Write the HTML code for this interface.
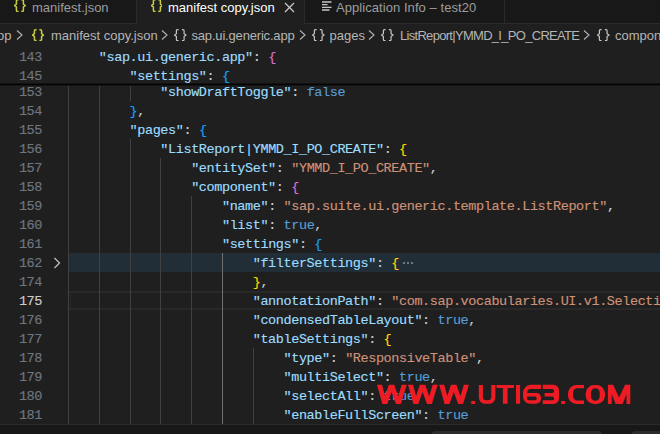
<!DOCTYPE html><html><head><meta charset="utf-8"><style>
*{margin:0;padding:0;box-sizing:border-box}
html,body{width:660px;height:434px;overflow:hidden;background:#1f1f1f}
body{position:relative;font-family:"Liberation Sans",sans-serif}
.abs{position:absolute}
#tabs{position:absolute;left:0;top:0;width:660px;height:24px;background:#181818;border-bottom:1px solid #2b2b2b}
.tab{position:absolute;top:0;height:23px;background:#181818;border-right:1px solid #2b2b2b}
.tab.act{background:#1f1f1f;height:24px}
.tt{position:absolute;top:1px;font-size:13px;line-height:13px;white-space:nowrap}
.bc{position:absolute;top:29px;font-size:13px;line-height:13px;color:#b5b5b5;white-space:nowrap}
.ln{position:absolute;left:0;-webkit-text-stroke:0.15px currentColor;width:42px;height:19px;text-align:right;font-family:"Liberation Mono",monospace;font-size:13.5px;letter-spacing:-0.403px;line-height:19px;color:#6e7681}
.ln.act{color:#cccccc}
.cl{position:absolute;height:19px;white-space:pre;-webkit-text-stroke:0.15px currentColor;font-family:"Liberation Mono",monospace;font-size:13.5px;letter-spacing:-0.403px;line-height:19px}
.ig{position:absolute;width:1px;background:#404040}
</style></head><body>

<div id="tabs"></div>
<div class="tab" style="left:0;width:137px"></div>
<div class="tab act" style="left:137px;width:168px"></div>
<div class="tab" style="left:305px;width:200px"></div>
<svg class="abs" style="left:14.2px;top:-1.5px" width="11.8" height="13.2" viewBox="0 0 11.8 13.2"><path d="M4.6,0.75 L3.4,0.75 Q2.4,0.75 2.4,1.95 L2.4,5.199999999999999 L0.5,6.6 L2.4,8.0 L2.4,11.25 Q2.4,12.45 3.4,12.45 L4.6,12.45 M7.200000000000001,0.75 L8.4,0.75 Q9.4,0.75 9.4,1.95 L9.4,5.199999999999999 L11.3,6.6 L9.4,8.0 L9.4,11.25 Q9.4,12.45 8.4,12.45 L7.200000000000001,12.45" fill="none" stroke="#cbcb41" stroke-width="1.5" stroke-linejoin="miter"/></svg>
<div class="tt" style="left:32px;color:#9d9d9d">manifest.json</div>
<svg class="abs" style="left:150.6px;top:-1.5px" width="11.8" height="13.2" viewBox="0 0 11.8 13.2"><path d="M4.6,0.75 L3.4,0.75 Q2.4,0.75 2.4,1.95 L2.4,5.199999999999999 L0.5,6.6 L2.4,8.0 L2.4,11.25 Q2.4,12.45 3.4,12.45 L4.6,12.45 M7.200000000000001,0.75 L8.4,0.75 Q9.4,0.75 9.4,1.95 L9.4,5.199999999999999 L11.3,6.6 L9.4,8.0 L9.4,11.25 Q9.4,12.45 8.4,12.45 L7.200000000000001,12.45" fill="none" stroke="#cbcb41" stroke-width="1.5" stroke-linejoin="miter"/></svg>
<div class="tt" style="left:168px;color:#ffffff">manifest copy.json</div>
<svg class="abs" style="left:284px;top:2px" width="11" height="11" viewBox="0 0 11 11"><path d="M1,1 L10,10 M10,1 L1,10" stroke="#cccccc" stroke-width="1.2"/></svg>
<svg class="abs" style="left:321px;top:0px" width="12" height="12" viewBox="0 0 12 12"><path d="M1,2 H10.5 M1,4.6 H6.5 M1,7.3 H10.5 M1,10 H8.5" stroke="#c5c5c5" stroke-width="1.3"/></svg>
<div class="tt" style="left:336px;color:#9d9d9d;letter-spacing:0.06px">Application Info – test20</div>
<div class="bc" style="left:-3px;letter-spacing:0px">op</div>
<div class="bc" style="left:51px;letter-spacing:0px">manifest copy.json</div>
<div class="bc" style="left:191.5px;letter-spacing:-0.18px">sap.ui.generic.app</div>
<div class="bc" style="left:329.5px;letter-spacing:0px">pages</div>
<div class="bc" style="left:400px;letter-spacing:-0.7px">ListReport|YMMD_I_PO_CREATE</div>
<div class="bc" style="left:615px;letter-spacing:0px">component</div>
<svg class="abs" style="left:15.5px;top:29px" width="8" height="12" viewBox="0 0 8 12"><path d="M1,1.5 L6,6 L1,10.5" fill="none" stroke="#b4b4b4" stroke-width="1.1"/></svg>
<svg class="abs" style="left:160.6px;top:29px" width="8" height="12" viewBox="0 0 8 12"><path d="M1,1.5 L6,6 L1,10.5" fill="none" stroke="#b4b4b4" stroke-width="1.1"/></svg>
<svg class="abs" style="left:298.8px;top:29px" width="8" height="12" viewBox="0 0 8 12"><path d="M1,1.5 L6,6 L1,10.5" fill="none" stroke="#b4b4b4" stroke-width="1.1"/></svg>
<svg class="abs" style="left:367.8px;top:29px" width="8" height="12" viewBox="0 0 8 12"><path d="M1,1.5 L6,6 L1,10.5" fill="none" stroke="#b4b4b4" stroke-width="1.1"/></svg>
<svg class="abs" style="left:583.3px;top:29px" width="8" height="12" viewBox="0 0 8 12"><path d="M1,1.5 L6,6 L1,10.5" fill="none" stroke="#b4b4b4" stroke-width="1.1"/></svg>
<svg class="abs" style="left:32px;top:28.7px" width="12" height="12.2" viewBox="0 0 12 12.2"><path d="M4.6,0.75 L3.4,0.75 Q2.4,0.75 2.4,1.95 L2.4,4.699999999999999 L0.5,6.1 L2.4,7.5 L2.4,10.25 Q2.4,11.45 3.4,11.45 L4.6,11.45 M7.4,0.75 L8.6,0.75 Q9.6,0.75 9.6,1.95 L9.6,4.699999999999999 L11.5,6.1 L9.6,7.5 L9.6,10.25 Q9.6,11.45 8.6,11.45 L7.4,11.45" fill="none" stroke="#cbcb41" stroke-width="1.5" stroke-linejoin="miter"/></svg>
<svg class="abs" style="left:174px;top:28.7px" width="12.5" height="12.2" viewBox="0 0 12.5 12.2"><path d="M4.6,0.6 L3.4,0.6 Q2.4,0.6 2.4,1.7999999999999998 L2.4,4.699999999999999 L0.5,6.1 L2.4,7.5 L2.4,10.4 Q2.4,11.6 3.4,11.6 L4.6,11.6 M7.9,0.6 L9.1,0.6 Q10.1,0.6 10.1,1.7999999999999998 L10.1,4.699999999999999 L12.0,6.1 L10.1,7.5 L10.1,10.4 Q10.1,11.6 9.1,11.6 L7.9,11.6" fill="none" stroke="#c5c5c5" stroke-width="1.2" stroke-linejoin="miter"/></svg>
<svg class="abs" style="left:312px;top:28.7px" width="12.5" height="12.2" viewBox="0 0 12.5 12.2"><path d="M4.6,0.6 L3.4,0.6 Q2.4,0.6 2.4,1.7999999999999998 L2.4,4.699999999999999 L0.5,6.1 L2.4,7.5 L2.4,10.4 Q2.4,11.6 3.4,11.6 L4.6,11.6 M7.9,0.6 L9.1,0.6 Q10.1,0.6 10.1,1.7999999999999998 L10.1,4.699999999999999 L12.0,6.1 L10.1,7.5 L10.1,10.4 Q10.1,11.6 9.1,11.6 L7.9,11.6" fill="none" stroke="#c5c5c5" stroke-width="1.2" stroke-linejoin="miter"/></svg>
<svg class="abs" style="left:381px;top:28.7px" width="12.5" height="12.2" viewBox="0 0 12.5 12.2"><path d="M4.6,0.6 L3.4,0.6 Q2.4,0.6 2.4,1.7999999999999998 L2.4,4.699999999999999 L0.5,6.1 L2.4,7.5 L2.4,10.4 Q2.4,11.6 3.4,11.6 L4.6,11.6 M7.9,0.6 L9.1,0.6 Q10.1,0.6 10.1,1.7999999999999998 L10.1,4.699999999999999 L12.0,6.1 L10.1,7.5 L10.1,10.4 Q10.1,11.6 9.1,11.6 L7.9,11.6" fill="none" stroke="#c5c5c5" stroke-width="1.2" stroke-linejoin="miter"/></svg>
<svg class="abs" style="left:597px;top:28.7px" width="12.5" height="12.2" viewBox="0 0 12.5 12.2"><path d="M4.6,0.6 L3.4,0.6 Q2.4,0.6 2.4,1.7999999999999998 L2.4,4.699999999999999 L0.5,6.1 L2.4,7.5 L2.4,10.4 Q2.4,11.6 3.4,11.6 L4.6,11.6 M7.9,0.6 L9.1,0.6 Q10.1,0.6 10.1,1.7999999999999998 L10.1,4.699999999999999 L12.0,6.1 L10.1,7.5 L10.1,10.4 Q10.1,11.6 9.1,11.6 L7.9,11.6" fill="none" stroke="#c5c5c5" stroke-width="1.2" stroke-linejoin="miter"/></svg>
<div class="abs" style="left:68px;top:253px;width:592px;height:19px;background:#212d37"></div>
<div class="abs" style="left:68px;top:291px;width:592px;height:19px;border-top:2px solid #282828;border-bottom:2px solid #282828"></div>
<div class="abs" style="left:70px;top:293px;width:1px;height:15px;background:#282828"></div>
<div class="ig" style="left:68px;top:82px;height:19px;background:#404040"></div>
<div class="ig" style="left:99px;top:82px;height:19px;background:#404040"></div>
<div class="ig" style="left:130px;top:82px;height:19px;background:#404040"></div>
<div class="ig" style="left:68px;top:101px;height:19px;background:#404040"></div>
<div class="ig" style="left:99px;top:101px;height:19px;background:#404040"></div>
<div class="ig" style="left:68px;top:120px;height:19px;background:#404040"></div>
<div class="ig" style="left:99px;top:120px;height:19px;background:#404040"></div>
<div class="ig" style="left:68px;top:139px;height:19px;background:#404040"></div>
<div class="ig" style="left:99px;top:139px;height:19px;background:#404040"></div>
<div class="ig" style="left:130px;top:139px;height:19px;background:#404040"></div>
<div class="ig" style="left:68px;top:158px;height:19px;background:#404040"></div>
<div class="ig" style="left:99px;top:158px;height:19px;background:#404040"></div>
<div class="ig" style="left:130px;top:158px;height:19px;background:#404040"></div>
<div class="ig" style="left:160px;top:158px;height:19px;background:#404040"></div>
<div class="ig" style="left:68px;top:177px;height:19px;background:#404040"></div>
<div class="ig" style="left:99px;top:177px;height:19px;background:#404040"></div>
<div class="ig" style="left:130px;top:177px;height:19px;background:#404040"></div>
<div class="ig" style="left:160px;top:177px;height:19px;background:#404040"></div>
<div class="ig" style="left:68px;top:196px;height:19px;background:#404040"></div>
<div class="ig" style="left:99px;top:196px;height:19px;background:#404040"></div>
<div class="ig" style="left:130px;top:196px;height:19px;background:#404040"></div>
<div class="ig" style="left:160px;top:196px;height:19px;background:#404040"></div>
<div class="ig" style="left:191px;top:196px;height:19px;background:#404040"></div>
<div class="ig" style="left:68px;top:215px;height:19px;background:#404040"></div>
<div class="ig" style="left:99px;top:215px;height:19px;background:#404040"></div>
<div class="ig" style="left:130px;top:215px;height:19px;background:#404040"></div>
<div class="ig" style="left:160px;top:215px;height:19px;background:#404040"></div>
<div class="ig" style="left:191px;top:215px;height:19px;background:#404040"></div>
<div class="ig" style="left:68px;top:234px;height:19px;background:#404040"></div>
<div class="ig" style="left:99px;top:234px;height:19px;background:#404040"></div>
<div class="ig" style="left:130px;top:234px;height:19px;background:#404040"></div>
<div class="ig" style="left:160px;top:234px;height:19px;background:#404040"></div>
<div class="ig" style="left:191px;top:234px;height:19px;background:#404040"></div>
<div class="ig" style="left:68px;top:253px;height:19px;background:#404040"></div>
<div class="ig" style="left:99px;top:253px;height:19px;background:#404040"></div>
<div class="ig" style="left:130px;top:253px;height:19px;background:#404040"></div>
<div class="ig" style="left:160px;top:253px;height:19px;background:#404040"></div>
<div class="ig" style="left:191px;top:253px;height:19px;background:#404040"></div>
<div class="ig" style="left:222px;top:253px;height:19px;background:#707070"></div>
<div class="ig" style="left:68px;top:272px;height:19px;background:#404040"></div>
<div class="ig" style="left:99px;top:272px;height:19px;background:#404040"></div>
<div class="ig" style="left:130px;top:272px;height:19px;background:#404040"></div>
<div class="ig" style="left:160px;top:272px;height:19px;background:#404040"></div>
<div class="ig" style="left:191px;top:272px;height:19px;background:#404040"></div>
<div class="ig" style="left:222px;top:272px;height:19px;background:#707070"></div>
<div class="ig" style="left:68px;top:291px;height:19px;background:#404040"></div>
<div class="ig" style="left:99px;top:291px;height:19px;background:#404040"></div>
<div class="ig" style="left:130px;top:291px;height:19px;background:#404040"></div>
<div class="ig" style="left:160px;top:291px;height:19px;background:#404040"></div>
<div class="ig" style="left:191px;top:291px;height:19px;background:#404040"></div>
<div class="ig" style="left:222px;top:291px;height:19px;background:#707070"></div>
<div class="ig" style="left:68px;top:310px;height:19px;background:#404040"></div>
<div class="ig" style="left:99px;top:310px;height:19px;background:#404040"></div>
<div class="ig" style="left:130px;top:310px;height:19px;background:#404040"></div>
<div class="ig" style="left:160px;top:310px;height:19px;background:#404040"></div>
<div class="ig" style="left:191px;top:310px;height:19px;background:#404040"></div>
<div class="ig" style="left:222px;top:310px;height:19px;background:#707070"></div>
<div class="ig" style="left:68px;top:329px;height:19px;background:#404040"></div>
<div class="ig" style="left:99px;top:329px;height:19px;background:#404040"></div>
<div class="ig" style="left:130px;top:329px;height:19px;background:#404040"></div>
<div class="ig" style="left:160px;top:329px;height:19px;background:#404040"></div>
<div class="ig" style="left:191px;top:329px;height:19px;background:#404040"></div>
<div class="ig" style="left:222px;top:329px;height:19px;background:#707070"></div>
<div class="ig" style="left:68px;top:348px;height:19px;background:#404040"></div>
<div class="ig" style="left:99px;top:348px;height:19px;background:#404040"></div>
<div class="ig" style="left:130px;top:348px;height:19px;background:#404040"></div>
<div class="ig" style="left:160px;top:348px;height:19px;background:#404040"></div>
<div class="ig" style="left:191px;top:348px;height:19px;background:#404040"></div>
<div class="ig" style="left:222px;top:348px;height:19px;background:#707070"></div>
<div class="ig" style="left:253px;top:348px;height:19px;background:#404040"></div>
<div class="ig" style="left:68px;top:367px;height:19px;background:#404040"></div>
<div class="ig" style="left:99px;top:367px;height:19px;background:#404040"></div>
<div class="ig" style="left:130px;top:367px;height:19px;background:#404040"></div>
<div class="ig" style="left:160px;top:367px;height:19px;background:#404040"></div>
<div class="ig" style="left:191px;top:367px;height:19px;background:#404040"></div>
<div class="ig" style="left:222px;top:367px;height:19px;background:#707070"></div>
<div class="ig" style="left:253px;top:367px;height:19px;background:#404040"></div>
<div class="ig" style="left:68px;top:386px;height:19px;background:#404040"></div>
<div class="ig" style="left:99px;top:386px;height:19px;background:#404040"></div>
<div class="ig" style="left:130px;top:386px;height:19px;background:#404040"></div>
<div class="ig" style="left:160px;top:386px;height:19px;background:#404040"></div>
<div class="ig" style="left:191px;top:386px;height:19px;background:#404040"></div>
<div class="ig" style="left:222px;top:386px;height:19px;background:#707070"></div>
<div class="ig" style="left:253px;top:386px;height:19px;background:#404040"></div>
<div class="ig" style="left:68px;top:405px;height:19px;background:#404040"></div>
<div class="ig" style="left:99px;top:405px;height:19px;background:#404040"></div>
<div class="ig" style="left:130px;top:405px;height:19px;background:#404040"></div>
<div class="ig" style="left:160px;top:405px;height:19px;background:#404040"></div>
<div class="ig" style="left:191px;top:405px;height:19px;background:#404040"></div>
<div class="ig" style="left:222px;top:405px;height:19px;background:#707070"></div>
<div class="ig" style="left:253px;top:405px;height:19px;background:#404040"></div>
<div class="ln" style="top:83px">153</div>
<div class="cl" style="top:83px;left:160.36px"><span style="color:#9cdcfe">"showDraftToggle"</span><span style="color:#cccccc">: </span><span style="color:#569cd6">false</span></div>
<div class="ln" style="top:102px">154</div>
<div class="cl" style="top:102px;left:129.58px"><span style="color:#179fff">}</span><span style="color:#cccccc">,</span></div>
<div class="ln" style="top:121px">155</div>
<div class="cl" style="top:121px;left:129.58px"><span style="color:#9cdcfe">"pages"</span><span style="color:#cccccc">: </span><span style="color:#179fff">{</span></div>
<div class="ln" style="top:140px">156</div>
<div class="cl" style="top:140px;left:160.36px"><span style="color:#9cdcfe">"ListReport|YMMD_I_PO_CREATE"</span><span style="color:#cccccc">: </span><span style="color:#ffd700">{</span></div>
<div class="ln" style="top:159px">157</div>
<div class="cl" style="top:159px;left:191.15px"><span style="color:#9cdcfe">"entitySet"</span><span style="color:#cccccc">: </span><span style="color:#ce9178">"YMMD_I_PO_CREATE"</span><span style="color:#cccccc">,</span></div>
<div class="ln" style="top:178px">158</div>
<div class="cl" style="top:178px;left:191.15px"><span style="color:#9cdcfe">"component"</span><span style="color:#cccccc">: </span><span style="color:#da70d6">{</span></div>
<div class="ln" style="top:197px">159</div>
<div class="cl" style="top:197px;left:221.94px"><span style="color:#9cdcfe">"name"</span><span style="color:#cccccc">: </span><span style="color:#ce9178">"sap.suite.ui.generic.template.ListReport"</span><span style="color:#cccccc">,</span></div>
<div class="ln" style="top:216px">160</div>
<div class="cl" style="top:216px;left:221.94px"><span style="color:#9cdcfe">"list"</span><span style="color:#cccccc">: </span><span style="color:#569cd6">true</span><span style="color:#cccccc">,</span></div>
<div class="ln" style="top:235px">161</div>
<div class="cl" style="top:235px;left:221.94px"><span style="color:#9cdcfe">"settings"</span><span style="color:#cccccc">: </span><span style="color:#179fff">{</span></div>
<div class="ln" style="top:254px">162</div>
<div class="cl" style="top:254px;left:252.73px"><span style="color:#9cdcfe">"filterSettings"</span><span style="color:#cccccc">: </span><span style="color:#ffd700">{</span></div>
<div class="ln" style="top:273px">174</div>
<div class="cl" style="top:273px;left:252.73px"><span style="color:#ffd700">}</span><span style="color:#cccccc">,</span></div>
<div class="ln act" style="top:292px">175</div>
<div class="cl" style="top:292px;left:252.73px"><span style="color:#9cdcfe">"annotationPath"</span><span style="color:#cccccc">: </span><span style="color:#ce9178">"com.sap.vocabularies.UI.v1.SelectionVariant"</span><span style="color:#cccccc">,</span></div>
<div class="ln" style="top:311px">176</div>
<div class="cl" style="top:311px;left:252.73px"><span style="color:#9cdcfe">"condensedTableLayout"</span><span style="color:#cccccc">: </span><span style="color:#569cd6">true</span><span style="color:#cccccc">,</span></div>
<div class="ln" style="top:330px">177</div>
<div class="cl" style="top:330px;left:252.73px"><span style="color:#9cdcfe">"tableSettings"</span><span style="color:#cccccc">: </span><span style="color:#ffd700">{</span></div>
<div class="ln" style="top:349px">178</div>
<div class="cl" style="top:349px;left:283.52px"><span style="color:#9cdcfe">"type"</span><span style="color:#cccccc">: </span><span style="color:#ce9178">"ResponsiveTable"</span><span style="color:#cccccc">,</span></div>
<div class="ln" style="top:368px">179</div>
<div class="cl" style="top:368px;left:283.52px"><span style="color:#9cdcfe">"multiSelect"</span><span style="color:#cccccc">: </span><span style="color:#569cd6">true</span><span style="color:#cccccc">,</span></div>
<div class="ln" style="top:387px">180</div>
<div class="cl" style="top:387px;left:283.52px"><span style="color:#9cdcfe">"selectAll"</span><span style="color:#cccccc">: </span><span style="color:#569cd6">true</span><span style="color:#cccccc">,</span></div>
<div class="ln" style="top:406px">181</div>
<div class="cl" style="top:406px;left:283.52px"><span style="color:#9cdcfe">"enableFullScreen"</span><span style="color:#cccccc">: </span><span style="color:#569cd6">true</span></div>
<svg class="abs" style="left:0;top:0" width="660" height="434" viewBox="0 0 660 434"><path fill="#ed1c24" fill-rule="evenodd" d="M377.00,384.80 L382.00,384.80 L385.08,395.90 L388.80,384.80 L394.20,384.80 L398.25,396.36 L401.70,384.80 L406.70,384.80 L400.90,403.90 L396.00,403.90 L391.56,392.12 L387.30,403.90 L382.40,403.90 Z M408.00,384.80 L413.00,384.80 L416.08,395.90 L419.80,384.80 L425.20,384.80 L429.25,396.36 L432.70,384.80 L437.70,384.80 L431.90,403.90 L427.00,403.90 L422.56,392.12 L418.30,403.90 L413.40,403.90 Z M439.20,384.80 L444.20,384.80 L447.28,395.90 L451.00,384.80 L456.40,384.80 L460.45,396.36 L463.90,384.80 L468.90,384.80 L463.10,403.90 L458.20,403.90 L453.76,392.12 L449.50,403.90 L444.60,403.90 Z M471.2,401.1 H475.2 V403.9 H471.2 Z M478.8,384.9 V397.3 A6.5,6.5 0 0 0 485.3,403.8 H488.9 A6.5,6.5 0 0 0 495.4,397.3 V384.9 H491.3 V396.8 A3.5,3.5 0 0 1 487.8,400.3 H486.4 A3.5,3.5 0 0 1 482.9,396.8 V384.9 Z M496.5,384.9 H514 V388.1 H507.6 V403.8 H502.9 V388.1 H496.5 Z M516,384.9 H520.1 V403.8 H516 Z M541,384.8 H531 A8,8 0 0 0 523,392.8 V396.8 A7,7 0 0 0 530,403.8 H536 A5,5 0 0 0 541,398.8 V397.4 A4.5,4.5 0 0 0 536.5,392.9 H527.2 V392.5 A3.5,3.5 0 0 1 530.7,389.0 H541 Z M527.2,396.5 H535.1 A1.5,1.5 0 0 1 536.6,398 V398.8 A1.5,1.5 0 0 1 535.1,400.3 H528.7 A1.5,1.5 0 0 1 527.2,398.8 Z M542.7,384.8 H553.5 A5.5,5.5 0 0 1 559,390.3 V398.4 A5.5,5.5 0 0 1 553.5,403.9 H542.7 V400.3 H552.2 A1.9,1.9 0 0 0 554.1,398.4 A1.9,1.9 0 0 0 552.2,396.5 H544.6 V393 H552.1 A2,2 0 0 0 554.1,391 A2,2 0 0 0 552.1,389 H542.7 Z M561.2,401.1 H565.1 V403.9 H561.2 Z M584,384.9 H576.5 A8.5,8.5 0 0 0 568,393.4 V395.4 A8.5,8.5 0 0 0 576.5,403.9 H584 V400.6 H577.5 A4.5,4.5 0 0 1 573,396.1 V392.8 A4.5,4.5 0 0 1 577.5,388.3 H584 Z M594.2,384.9 H596.5 A8.5,8.5 0 0 1 605,393.4 V395.4 A8.5,8.5 0 0 1 596.5,403.9 H594.2 A8.5,8.5 0 0 1 585.7,395.4 V393.4 A8.5,8.5 0 0 1 594.2,384.9 Z M595.3,388.3 A4.3,4.3 0 0 0 591,392.6 V396.4 A4.3,4.3 0 0 0 595.3,400.7 H595.4 A4.3,4.3 0 0 0 599.7,396.4 V392.6 A4.3,4.3 0 0 0 595.4,388.3 Z M607.9,384.8 L613.1,384.8 L619.1,397.5 L625.1,384.8 L630.3,384.8 L630.3,403.9 L626.5,403.9 L626.5,394.2 L622.6,403.9 L615.6,403.9 L611.7,394.2 L611.7,403.9 L607.9,403.9 Z"/></svg>
<div class="abs" style="left:402.8px;top:262px;width:2px;height:2px;background:#737880"></div>
<div class="abs" style="left:406.9px;top:262px;width:2px;height:2px;background:#737880"></div>
<div class="abs" style="left:411.0px;top:262px;width:2px;height:2px;background:#737880"></div>
<svg class="abs" style="left:53px;top:257px" width="9" height="12" viewBox="0 0 9 12"><path d="M1.5,1 L6.5,6 L1.5,11" fill="none" stroke="#c5c5c5" stroke-width="1.2"/></svg>
<div class="abs" style="left:0;top:46px;width:660px;height:37px;background:#1f1f1f"></div>
<div class="ln" style="top:48px">143</div>
<div class="cl" style="top:48px;left:98.79px"><span style="color:#9cdcfe">"sap.ui.generic.app"</span><span style="color:#cccccc">: </span><span style="color:#da70d6">{</span></div>
<div class="ln" style="top:67px">145</div>
<div class="cl" style="top:67px;left:129.58px"><span style="color:#9cdcfe">"settings"</span><span style="color:#cccccc">: </span><span style="color:#179fff">{</span></div>
<div class="abs" style="left:0;top:83px;width:660px;height:1px;background:#121212"></div>
<div class="abs" style="left:0;top:84px;width:660px;height:1px;background:#030303"></div>
<div class="abs" style="left:0;top:85px;width:660px;height:1px;background:#151515"></div>
<div class="abs" style="left:0;top:424px;width:660px;height:10px;background:#181818;border-top:1px solid #2b2b2b"></div>
<div class="abs" style="left:432px;top:431px;width:170px;height:6px;background:#2b2b2b;border-radius:3px"></div>
<div class="abs" style="left:632px;top:431px;width:40px;height:6px;background:#2b2b2b;border-radius:3px"></div>
</body></html>
